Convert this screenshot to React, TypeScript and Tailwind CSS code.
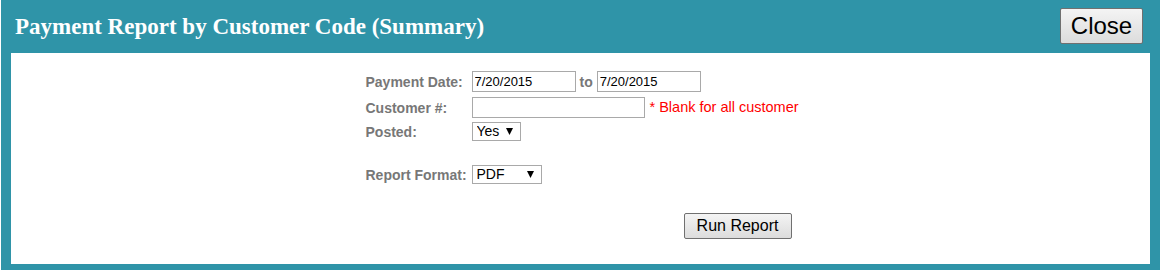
import React, { useState } from "react";

const btn =
  "border border-[#707070] rounded-[2px] bg-gradient-to-b from-[#f4f4f4] to-[#dcdcdc] text-black font-['Liberation_Sans',Arial,sans-serif] leading-none";

const label = "w-[106px] shrink-0 text-[14px] font-bold leading-none text-[#777] font-['Liberation_Sans',Arial,sans-serif]";

const field =
  "h-[21px] border border-[#a9a9a9] px-[2px] text-[13px] text-black font-['Liberation_Sans',Arial,sans-serif] outline-none bg-white";

function Select({ value, options, width }: { value: string; options: string[]; width: string }) {
  const [v, setV] = useState(value);
  return (
    <div className={`relative h-[19px] ${width}`}>
      <select
        value={v}
        onChange={(e) => setV(e.target.value)}
        className="block h-[19px] w-full appearance-none border border-[#a9a9a9] bg-white py-0 pl-[4px] text-[14px] leading-[17px] text-black font-['Liberation_Sans',Arial,sans-serif] outline-none"
      >
        {options.map((o) => (
          <option key={o}>{o}</option>
        ))}
      </select>
      <svg
        className="pointer-events-none absolute right-[8px] top-[6px]"
        width="7"
        height="7"
        viewBox="0 0 7 7"
      >
        <path d="M0 0H7L3.5 7Z" fill="#000" />
      </svg>
    </div>
  );
}

export default function App() {
  const [from, setFrom] = useState("7/20/2015");
  const [to, setTo] = useState("7/20/2015");
  const [cust, setCust] = useState("");

  return (
    <div className="min-h-screen bg-white pl-px">
      <div className="flex h-[270px] w-[1159px] flex-col bg-[#2f94a8]">
        <div className="flex h-[53px] shrink-0 items-start justify-between pl-[14px] pr-[17px]">
          <h1 className="pt-[15px] text-[23px] font-bold leading-none text-white font-['Liberation_Serif','Times_New_Roman',serif]">
            Payment Report by Customer Code (Summary)
          </h1>
          <button className={`${btn} mt-[8px] h-[36px] w-[83px] text-[24px]`}>Close</button>
        </div>

        <div className="mx-[10px] h-[211px] shrink-0 bg-white pt-[18px]">
          <div className="mx-auto flex w-[432px] flex-col pl-[1px]">
            <div className="flex h-[21px] items-center">
              <div className={label}>Payment Date:</div>
              <input className={`${field} w-[104px]`} value={from} onChange={(e) => setFrom(e.target.value)} />
              <span className="px-[4px] text-[14px] font-bold leading-none text-[#777] font-['Liberation_Sans',Arial,sans-serif]">
                to
              </span>
              <input className={`${field} w-[104px]`} value={to} onChange={(e) => setTo(e.target.value)} />
            </div>

            <div className="mt-[5px] flex h-[21px] items-center">
              <div className={label}>Customer #:</div>
              <input className={`${field} w-[173px] shrink-0`} value={cust} onChange={(e) => setCust(e.target.value)} />
              <span className="shrink-0 whitespace-nowrap pl-[5px] text-[14.5px] leading-none text-[#ff0000] font-['Liberation_Sans',Arial,sans-serif]">
                * Blank for all customer
              </span>
            </div>

            <div className="mt-[4px] flex h-[19px] items-center">
              <div className={label}>Posted:</div>
              <Select value="Yes" options={["Yes", "No"]} width="w-[49px]" />
            </div>

            <div className="mt-[24px] flex h-[19px] items-center">
              <div className={label}>Report Format:</div>
              <Select value="PDF" options={["PDF", "Excel"]} width="w-[70px]" />
            </div>

            <div className="mt-[29px] flex justify-end pr-[5px]">
              <button className={`${btn} h-[26px] w-[108px] text-[16px]`}>Run Report</button>
            </div>
          </div>
        </div>
      </div>
    </div>
  );
}
